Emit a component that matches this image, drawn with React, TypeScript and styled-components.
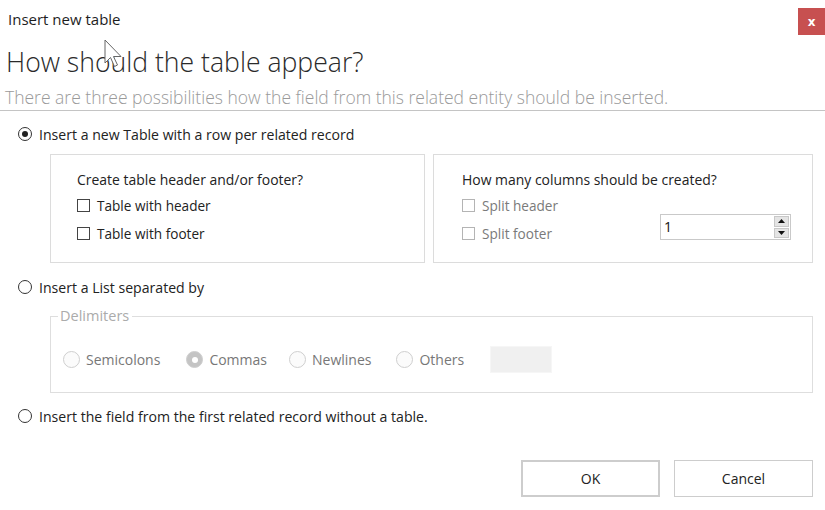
import React from "react";
import styled, { createGlobalStyle } from "styled-components";

const Global = createGlobalStyle`
  html, body { margin: 0; padding: 0; background: #fff; }
  body { font-family: "Open Sans", "Noto Sans", "Liberation Sans", sans-serif; color: #222; }
  * { box-sizing: border-box; }
`;

const Dialog = styled.div`
  position: relative;
  width: 825px;
  height: 510px;
  background: #fff;
  overflow: hidden;
  display: flex;
  flex-direction: column;
`;

const TitleBar = styled.div`
  height: 42px;
  display: flex;
  justify-content: space-between;
  align-items: flex-start;
`;

const TitleText = styled.div`
  padding-left: 8px;
  line-height: 38px;
  font-size: 15px;
  color: #1e1e1e;
`;

const CloseButton = styled.div`
  margin-top: 8px;
  width: 27px;
  height: 27px;
  background: #c75050;
  color: #fff;
  font-size: 12px;
  font-weight: 700;
  display: flex;
  align-items: center;
  justify-content: center;
  font-family: "DejaVu Sans", sans-serif;
`;

const Header = styled.div`
  border-bottom: 1px solid #c4c4c4;
  padding-left: 6px;
`;

const Heading = styled.div`
  height: 40px;
  line-height: 40px;
  font-size: 26.6px;
  font-weight: 300;
  color: #2a2a2a;
`;

const Subtitle = styled.div`
  margin-top: 2px;
  height: 26px;
  line-height: 26px;
  font-size: 17.5px;
  font-weight: 300;
  color: #9a9a9a;
  margin-left: -1px;
`;

const Content = styled.div`
  padding: 11px 12px 0 18px;
  display: flex;
  flex-direction: column;
`;

const OptionRow = styled.div<{ $mt?: number }>`
  height: 24px;
  display: flex;
  align-items: center;
  gap: 7px;
  font-size: 14.1px;
  margin-top: ${(p) => p.$mt ?? 0}px;
`;

const Radio = styled.span<{ $checked?: boolean }>`
  width: 14px;
  height: 14px;
  border: 1px solid #333;
  border-radius: 50%;
  display: inline-flex;
  align-items: center;
  justify-content: center;
  flex: none;
  &::after {
    content: "";
    width: 6px;
    height: 6px;
    border-radius: 50%;
    background: #222;
    display: ${(p) => (p.$checked ? "block" : "none")};
  }
`;

const BoxRow = styled.div`
  margin-top: 8px;
  margin-left: 32px;
  display: flex;
  gap: 8px;
`;

const Box = styled.div<{ $w: number; $pl: number; $pr?: number }>`
  width: ${(p) => p.$w}px;
  height: 109px;
  border: 1px solid #dcdcdc;
  padding: 15px ${(p) => p.$pr ?? 0}px 0 ${(p) => p.$pl}px;
  display: flex;
  flex-direction: column;
`;

const Question = styled.div`
  height: 20px;
  line-height: 20px;
  font-size: 13.95px;
  color: #222;
  margin-bottom: 1px;
`;

const CheckRow = styled.div<{ $disabled?: boolean }>`
  height: 28px;
  display: flex;
  align-items: center;
  gap: 7px;
  font-size: 13.6px;
  color: ${(p) => (p.$disabled ? "#7a7a7a" : "#222")};
`;

const Check = styled.span<{ $disabled?: boolean }>`
  width: 13px;
  height: 13px;
  border: 1px solid ${(p) => (p.$disabled ? "#b4b4b4" : "#444")};
  background: #fff;
  flex: none;
`;

const SplitArea = styled.div`
  display: flex;
  justify-content: space-between;
  align-items: flex-end;
`;

const CheckColumn = styled.div`
  display: flex;
  flex-direction: column;
`;

const Spinner = styled.div`
  width: 131px;
  height: 26px;
  margin-bottom: 7px;
  border: 1px solid #c9c9c9;
  display: flex;
  align-items: stretch;
`;

const SpinValue = styled.div`
  flex: 1;
  padding-left: 3px;
  font-size: 14px;
  line-height: 24px;
  color: #111;
`;

const SpinButtons = styled.div`
  width: 15px;
  margin: 1px 1px 1px 0;
  display: flex;
  flex-direction: column;
  gap: 1px;
`;

const SpinButton = styled.div`
  flex: 1;
  background: #e4e4e4;
  border: 1px solid #c8c8c8;
  display: flex;
  align-items: center;
  justify-content: center;
`;

const Fieldset = styled.fieldset`
  margin: 7px 0 0 32px;
  width: 763px;
  height: 87px;
  border: 1px solid #dedede;
  padding: 0 12px 0 12px;
  display: flex;
  align-items: flex-start;
`;

const Legend = styled.legend`
  padding: 0 3px 0 2px;
  margin-left: -5px;
  font-size: 14.5px;
  line-height: 20px;
  color: #ababab;
`;

const DelimRow = styled.div`
  margin-top: 20px;
  height: 27px;
  display: flex;
  align-items: center;
`;

const DelimItem = styled.div<{ $mr: number }>`
  display: flex;
  align-items: center;
  gap: 6px;
  font-size: 14px;
  color: #777;
  margin-right: ${(p) => p.$mr}px;
`;

const BigRadio = styled.span<{ $checked?: boolean }>`
  width: 17px;
  height: 17px;
  border-radius: 50%;
  flex: none;
  border: 1px solid #cfcfcf;
  background: ${(p) => (p.$checked ? "#c4c4c4" : "#fbfbfb")};
  display: inline-flex;
  align-items: center;
  justify-content: center;
  &::after {
    content: "";
    width: 6px;
    height: 6px;
    border-radius: 50%;
    background: #fff;
    display: ${(p) => (p.$checked ? "block" : "none")};
  }
`;

const OtherInput = styled.div`
  width: 62px;
  height: 27px;
  background: #f0f0f0;
  border: 1px solid #f6f6f6;
`;

const Footer = styled.div`
  margin-top: auto;
  padding: 0 12px 13px 0;
  display: flex;
  justify-content: flex-end;
  gap: 14px;
`;

const Button = styled.div<{ $default?: boolean }>`
  width: 139px;
  height: 37px;
  border: ${(p) => (p.$default ? "2px solid #cdcdcd" : "1px solid #cdcdcd")};
  background: #fff;
  display: flex;
  align-items: center;
  justify-content: center;
  font-size: 14px;
  color: #222;
`;

const Cursor = styled.svg`
  position: absolute;
  left: 104px;
  top: 39px;
`;

export default function App() {
  return (
    <>
      <Global />
      <Dialog>
        <TitleBar>
          <TitleText>Insert new table</TitleText>
          <CloseButton>x</CloseButton>
        </TitleBar>
        <Header>
          <Heading>How should the table appear?</Heading>
          <Subtitle>There are three possibilities how the field from this related entity should be inserted.</Subtitle>
        </Header>
        <Content>
          <OptionRow>
            <Radio $checked />
            Insert a new Table with a row per related record
          </OptionRow>
          <BoxRow>
            <Box $w={375} $pl={26}>
              <Question>Create table header and/or footer?</Question>
              <CheckRow>
                <Check />
                Table with header
              </CheckRow>
              <CheckRow>
                <Check />
                Table with footer
              </CheckRow>
            </Box>
            <Box $w={380} $pl={28} $pr={21}>
              <Question>How many columns should be created?</Question>
              <SplitArea>
                <CheckColumn>
                  <CheckRow $disabled>
                    <Check $disabled />
                    Split header
                  </CheckRow>
                  <CheckRow $disabled>
                    <Check $disabled />
                    Split footer
                  </CheckRow>
                </CheckColumn>
                <Spinner>
                  <SpinValue>1</SpinValue>
                  <SpinButtons>
                    <SpinButton>
                      <svg width="7" height="4" viewBox="0 0 7 4">
                        <path d="M0 4 L3.5 0 L7 4 Z" fill="#111" />
                      </svg>
                    </SpinButton>
                    <SpinButton>
                      <svg width="7" height="4" viewBox="0 0 7 4">
                        <path d="M0 0 L3.5 4 L7 0 Z" fill="#111" />
                      </svg>
                    </SpinButton>
                  </SpinButtons>
                </Spinner>
              </SplitArea>
            </Box>
          </BoxRow>
          <OptionRow $mt={12}>
            <Radio />
            Insert a List separated by
          </OptionRow>
          <Fieldset>
            <Legend>Delimiters</Legend>
            <DelimRow>
              <DelimItem $mr={26}>
                <BigRadio />
                Semicolons
              </DelimItem>
              <DelimItem $mr={22}>
                <BigRadio $checked />
                Commas
              </DelimItem>
              <DelimItem $mr={25}>
                <BigRadio />
                Newlines
              </DelimItem>
              <DelimItem $mr={26}>
                <BigRadio />
                Others
              </DelimItem>
              <OtherInput />
            </DelimRow>
          </Fieldset>
          <OptionRow $mt={11}>
            <Radio />
            Insert the field from the first related record without a table.
          </OptionRow>
        </Content>
        <Footer>
          <Button $default>OK</Button>
          <Button>Cancel</Button>
        </Footer>
        <Cursor width="20" height="30" viewBox="0 0 20 30">
          <path
            d="M1 1 L1 24 L6.5 18.5 L10.5 27.5 L13.5 26 L9.5 17.5 L17 17.5 Z"
            fill="#fff"
            stroke="#666"
            strokeWidth="1"
            strokeLinejoin="miter"
          />
        </Cursor>
      </Dialog>
    </>
  );
}
